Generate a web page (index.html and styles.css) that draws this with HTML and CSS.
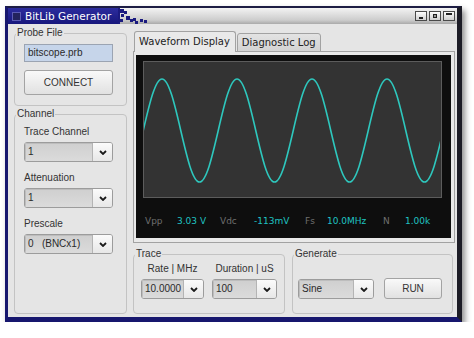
FILE: index.html
```html
<!DOCTYPE html>
<html lang="en">
<head>
    <meta charset="UTF-8">
    <title>BitLib Generator</title>
    <link rel="stylesheet" href="styles.css">
</head>
<body>
    <div class="window">
        <div class="titlebar">
            <div class="title-fill">
                <span class="app-icon"></span>
                <span class="title">BitLib Generator</span>
            </div>
            <svg class="dither" width="32" height="16" viewBox="0 0 32 16">
                <rect x="0" y="0" width="2" height="16" fill="#1b1b80" />
                <rect x="2" y="1" width="4" height="4" fill="#1b1b80" />
                <rect x="3" y="6" width="3" height="3" fill="#1b1b80" />
                <rect x="6" y="3" width="3" height="3" fill="#1b1b80" />
                <rect x="2" y="11" width="3" height="3" fill="#1b1b80" />
                <rect x="8" y="8" width="4" height="4" fill="#1b1b80" />
                <rect x="12" y="11" width="3" height="3" fill="#1b1b80" />
                <rect x="15" y="10" width="3" height="3" fill="#1b1b80" />
                <rect x="17" y="13" width="3" height="3" fill="#1b1b80" />
                <rect x="22" y="11" width="3" height="3" fill="#1b1b80" />
                <rect x="26" y="12" width="3" height="3" fill="#1b1b80" />
            </svg>
            <div class="win-buttons">
                <span class="wbtn"><svg width="10" height="8" viewBox="0 0 10 8"><rect x="3" y="5" width="4" height="2" fill="#222" /></svg></span>
                <span class="wbtn"><svg width="10" height="8" viewBox="0 0 10 8"><rect x="3" y="2" width="4" height="4" fill="#222" /><rect x="4" y="3" width="2" height="2" fill="#999" /></svg></span>
                <span class="wbtn"><svg width="10" height="8" viewBox="0 0 10 8"><rect x="2" y="1" width="6" height="2" fill="#222" /></svg></span>
            </div>
        </div>

        <div class="main">
            <div class="left">
                <fieldset class="group probe">
                    <legend>Probe File</legend>
                    <div class="group-body">
                        <div class="text-field">bitscope.prb</div>
                        <button class="btn connect">CONNECT</button>
                    </div>
                </fieldset>
                <fieldset class="group channel">
                    <legend>Channel</legend>
                    <div class="group-body">
                        <span class="field-label">Trace Channel</span>
                        <div class="combo wide"><span class="value">1</span><span class="arrow"><svg width="8" height="5" viewBox="0 0 8 5"><path d="M1 1 L4 4 L7 1" /></svg></span></div>
                        <span class="field-label">Attenuation</span>
                        <div class="combo wide"><span class="value">1</span><span class="arrow"><svg width="8" height="5" viewBox="0 0 8 5"><path d="M1 1 L4 4 L7 1" /></svg></span></div>
                        <span class="field-label">Prescale</span>
                        <div class="combo wide"><span class="value">0   (BNCx1)</span><span class="arrow"><svg width="8" height="5" viewBox="0 0 8 5"><path d="M1 1 L4 4 L7 1" /></svg></span></div>
                    </div>
                </fieldset>
            </div>

            <div class="right">
                <div class="tabs">
                    <div class="tab active">Waveform Display</div>
                    <div class="tab">Diagnostic Log</div>
                </div>
                <div class="pane">
                    <div class="scope">
                        <div class="plot">
                            <svg width="296" height="135" viewBox="0 0 296 135">
                                <path class="trace-line" d="M-0.75 68.5
                                    c6.115,-26.38 11.965,-51.5 18.75,-51.5 c6.785,0 12.635,25.12 18.75,51.5 c6.115,26.38 11.965,51.5 18.75,51.5 c6.785,0 12.635,-25.12 18.75,-51.5
                                    c6.115,-26.38 11.965,-51.5 18.75,-51.5 c6.785,0 12.635,25.12 18.75,51.5 c6.115,26.38 11.965,51.5 18.75,51.5 c6.785,0 12.635,-25.12 18.75,-51.5
                                    c6.115,-26.38 11.965,-51.5 18.75,-51.5 c6.785,0 12.635,25.12 18.75,51.5 c6.115,26.38 11.965,51.5 18.75,51.5 c6.785,0 12.635,-25.12 18.75,-51.5
                                    c6.115,-26.38 11.965,-51.5 18.75,-51.5 c6.785,0 12.635,25.12 18.75,51.5 c6.115,26.38 11.965,51.5 18.75,51.5 c6.785,0 12.635,-25.12 18.75,-51.5" />
                            </svg>
                        </div>
                        <div class="readouts">
                            <span class="key">Vpp</span><span class="val">3.03 V</span>
                            <span class="key">Vdc</span><span class="val">-113mV</span>
                            <span class="key">Fs</span><span class="val">10.0MHz</span>
                            <span class="key">N</span><span class="val">1.00k</span>
                        </div>
                    </div>
                </div>

                <div class="controls">
                    <fieldset class="group trace">
                        <legend>Trace</legend>
                        <div class="group-body">
                            <div class="col">
                                <span class="field-label">Rate | MHz</span>
                                <div class="combo rate"><span class="value">10.0000</span><span class="arrow"><svg width="8" height="5" viewBox="0 0 8 5"><path d="M1 1 L4 4 L7 1" /></svg></span></div>
                            </div>
                            <div class="col">
                                <span class="field-label">Duration | uS</span>
                                <div class="combo duration"><span class="value">100</span><span class="arrow"><svg width="8" height="5" viewBox="0 0 8 5"><path d="M1 1 L4 4 L7 1" /></svg></span></div>
                            </div>
                        </div>
                    </fieldset>
                    <fieldset class="group generate">
                        <legend>Generate</legend>
                        <div class="group-body">
                            <div class="combo wave"><span class="value">Sine</span><span class="arrow"><svg width="8" height="5" viewBox="0 0 8 5"><path d="M1 1 L4 4 L7 1" /></svg></span></div>
                            <button class="btn run">RUN</button>
                        </div>
                    </fieldset>
                </div>
            </div>
        </div>
    </div>
</body>
</html>
```

FILE: styles.css
```css
body {
    margin: 0;
    padding: 6px 0 0 5px;
    background: #fff;
    font-family: "Liberation Sans", Arial, sans-serif;
    font-size: 10px;
    color: #2a2a2a;
}

.window {
    width: 457px;
    height: 316px;
    box-sizing: border-box;
    border-style: solid;
    border-width: 2px 5px 5px 3px;
    border-color: #1d1d44 #1c1c26 #17176e #17176e;
    background: #e5e5e5;
    display: flex;
    flex-direction: column;
    box-shadow: 3px 4px 6px rgba(0,0,0,0.45);
}

/* title bar */
.titlebar {
    height: 16px;
    display: flex;
    align-items: center;
    background: linear-gradient(#f3f3f3, #cdcdcd 75%, #a9a9a9);
}

.title-fill {
    width: 110px;
    align-self: stretch;
    display: flex;
    align-items: center;
    background: linear-gradient(#2c2c9e, #17177c);
    color: #fff;
}

.app-icon {
    width: 7px;
    height: 7px;
    margin: 0 4px 0 4px;
    background: #23235e;
    border: 1px solid #5b5bb4;
}

.title {
    font-family: "DejaVu Sans", sans-serif;
    font-size: 10.5px;
    white-space: nowrap;
}

.dither {
    align-self: stretch;
}

.win-buttons {
    margin-left: auto;
    margin-right: 2px;
    display: flex;
    gap: 2px;
}

.wbtn {
    display: flex;
    width: 10px;
    height: 8px;
    border: 1px solid #4a4a4a;
    background: linear-gradient(#fdfdfd, #cfcfcf);
}

/* body */
.main {
    flex: 1;
    display: flex;
    gap: 6px;
    padding: 2px 2px 3px 6px;
    min-height: 0;
}

.left {
    width: 113px;
    display: flex;
    flex-direction: column;
    gap: 1px;
}

.group {
    margin: 0;
    padding: 0;
    min-width: 0;
    box-sizing: border-box;
    border: 1px solid #c3c3c3;
    border-radius: 4px;
}

.group legend {
    margin-left: 1px;
    padding: 0 1px;
    line-height: 14px;
    color: #333;
}

.field-label {
    display: block;
    line-height: 14px;
    margin-bottom: 3px;
    color: #333;
}

.probe .group-body {
    padding: 4px 0 10px 9px;
}

.channel {
    flex: 1;
}

.channel .group-body {
    padding: 4px 0 0 9px;
}

.channel .combo {
    margin-bottom: 9px;
}

.text-field {
    width: 89px;
    height: 18px;
    box-sizing: border-box;
    border: 1px solid #9ba4b2;
    background: #c6d5ea;
    padding-left: 3px;
    line-height: 16px;
    color: #2a2a2a;
}

.btn {
    display: block;
    box-sizing: border-box;
    border: 1px solid #a3a3a3;
    border-radius: 3px;
    background: linear-gradient(#f9f9f9, #e1e1e1);
    font-family: "Liberation Sans", Arial, sans-serif;
    font-size: 10px;
    color: #333;
    padding: 0;
}

.connect {
    width: 89px;
    height: 25px;
    margin-top: 8px;
}

.run {
    width: 58px;
    height: 21px;
    margin-top: -1px;
}

/* combo box */
.combo {
    display: flex;
    height: 20px;
    box-sizing: border-box;
    border: 1px solid #9c9c9c;
    border-radius: 3px;
    overflow: hidden;
}

.combo .value {
    flex: 1;
    padding-left: 3px;
    line-height: 18px;
    white-space: pre;
    background: linear-gradient(#cfcfcf, #dbdbdb);
    box-shadow: inset 1px 1px 0 #bdbdbd;
    color: #2a2a2a;
}

.combo .arrow {
    width: 19px;
    border-left: 1px solid #b4b4b4;
    background: linear-gradient(#fbfbfb, #e7e7e7);
    display: flex;
    align-items: center;
    justify-content: center;
}

.combo .arrow path {
    fill: none;
    stroke: #1a1a1a;
    stroke-width: 1.8;
}

.combo.wide { width: 89px; }
.combo.rate { width: 63px; }
.combo.duration { width: 65px; }
.combo.wave { width: 76px; }

/* right side */
.right {
    width: 322px;
    display: flex;
    flex-direction: column;
    padding-top: 5px;
}

.tabs {
    height: 21px;
    display: flex;
    align-items: flex-end;
    padding-left: 1px;
    margin-bottom: -1px;
    position: relative;
    z-index: 1;
}

.tab {
    font-family: "DejaVu Sans", sans-serif;
    font-size: 10px;
    color: #222;
    border: 1px solid #a2a2a2;
    border-radius: 3px 3px 0 0;
    height: 17px;
    line-height: 17px;
    padding: 0 4px;
    margin-left: 1px;
    background: linear-gradient(#e3e3e3, #d3d3d3);
}

.tab.active {
    height: 20px;
    line-height: 19px;
    border-bottom: none;
    padding: 0 5px 0 4px;
    margin-left: 0;
    background: #e9e9e9;
}

.pane {
    height: 192px;
    box-sizing: border-box;
    border: 1px solid #a2a2a2;
    background: #e9e9e9;
    padding: 3px 3px 4px 2px;
}

.scope {
    height: 100%;
    box-sizing: border-box;
    background: #0e0e0e;
    padding: 6px 9px 0 7px;
}

.plot {
    height: 137px;
    box-sizing: border-box;
    border: 1px solid #5c5c5c;
    background: #333;
}

.plot svg {
    display: block;
}

.trace-line {
    fill: none;
    stroke: #2ec8be;
    stroke-width: 1.6;
}

.readouts {
    display: grid;
    grid-template-columns: 32px 43px 34px 51px 22px 56px 22px auto;
    padding-left: 2px;
    margin-top: 16px;
    line-height: 14px;
    font-family: "DejaVu Sans", sans-serif;
    font-size: 9px;
}

.readouts .key { color: #6e6e6e; }
.readouts .val { color: #1fc2c2; }

.controls {
    flex: 1;
    display: flex;
    gap: 7px;
    margin-top: 4px;
}

.trace { width: 152px; }
.generate { width: 161px; }

.trace .group-body {
    display: flex;
    gap: 8px;
    padding: 1px 0 0 7px;
}

.col {
    display: flex;
    flex-direction: column;
    align-items: center;
}

.generate .group-body {
    display: flex;
    gap: 10px;
    padding: 18px 0 0 5px;
}
```
